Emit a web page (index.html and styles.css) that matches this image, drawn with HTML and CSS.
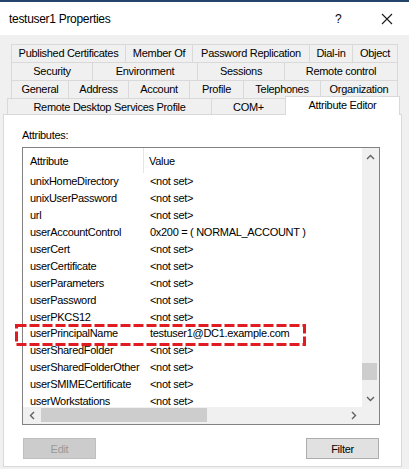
FILE: index.html
```html
<!DOCTYPE html>
<html>
<head>
<meta charset="utf-8">
<link rel="stylesheet" href="styles.css">
</head>
<body>
<div class="dialog">
  <div class="titlebar">
    <span class="title">testuser1 Properties</span>
    <span class="help">?</span>
    <svg class="close" width="12" height="12" viewBox="0 0 12 12"><path d="M1 1 L11 11 M11 1 L1 11" stroke="#1a1a1a" stroke-width="1.1" fill="none"/></svg>
  </div>
  <div class="tabs">
    <div class="row row1">
      <div class="tab">Published Certificates</div>
      <div class="tab">Member Of</div>
      <div class="tab">Password Replication</div>
      <div class="tab">Dial-in</div>
      <div class="tab">Object</div>
    </div>
    <div class="row row2">
      <div class="tab">Security</div>
      <div class="tab">Environment</div>
      <div class="tab">Sessions</div>
      <div class="tab">Remote control</div>
    </div>
    <div class="row row3">
      <div class="tab">General</div>
      <div class="tab">Address</div>
      <div class="tab">Account</div>
      <div class="tab">Profile</div>
      <div class="tab">Telephones</div>
      <div class="tab">Organization</div>
    </div>
    <div class="row row4">
      <div class="tab">Remote Desktop Services Profile</div>
      <div class="tab">COM+</div>
      <div class="tab selected">Attribute Editor</div>
    </div>
  </div>
  <div class="panel">
    <div class="label">Attributes:</div>
    <div class="listbox">
      <div class="listmain">
        <div class="header">
          <div class="hcell c1">Attribute</div>
          <div class="hcell c2">Value</div>
        </div>
        <div class="rows">
          <div class="lrow"><span class="c1">unixHomeDirectory</span><span class="c2">&lt;not set&gt;</span></div>
          <div class="lrow"><span class="c1">unixUserPassword</span><span class="c2">&lt;not set&gt;</span></div>
          <div class="lrow"><span class="c1">url</span><span class="c2">&lt;not set&gt;</span></div>
          <div class="lrow"><span class="c1">userAccountControl</span><span class="c2">0x200 = ( NORMAL_ACCOUNT )</span></div>
          <div class="lrow"><span class="c1">userCert</span><span class="c2">&lt;not set&gt;</span></div>
          <div class="lrow"><span class="c1">userCertificate</span><span class="c2">&lt;not set&gt;</span></div>
          <div class="lrow"><span class="c1">userParameters</span><span class="c2">&lt;not set&gt;</span></div>
          <div class="lrow"><span class="c1">userPassword</span><span class="c2">&lt;not set&gt;</span></div>
          <div class="lrow"><span class="c1">userPKCS12</span><span class="c2">&lt;not set&gt;</span></div>
          <div class="lrow"><span class="c1">userPrincipalName</span><span class="c2">testuser1@DC1.example.com</span></div>
          <div class="lrow"><span class="c1">userSharedFolder</span><span class="c2">&lt;not set&gt;</span></div>
          <div class="lrow"><span class="c1">userSharedFolderOther</span><span class="c2">&lt;not set&gt;</span></div>
          <div class="lrow"><span class="c1">userSMIMECertificate</span><span class="c2">&lt;not set&gt;</span></div>
          <div class="lrow"><span class="c1">userWorkstations</span><span class="c2">&lt;not set&gt;</span></div>
        </div>
      </div>
      <div class="vscroll">
        <div class="sbtn"><svg width="9" height="6" viewBox="0 0 9 6"><path d="M1 5 L4.5 1.5 L8 5" stroke="#606060" stroke-width="1.4" fill="none"/></svg></div>
        <div class="vtrack"><div class="vthumb"></div></div>
        <div class="sbtn"><svg width="9" height="6" viewBox="0 0 9 6"><path d="M1 1 L4.5 4.5 L8 1" stroke="#606060" stroke-width="1.4" fill="none"/></svg></div>
      </div>
      <div class="hscroll">
        <div class="sbtn"><svg width="6" height="9" viewBox="0 0 6 9"><path d="M5 1 L1.5 4.5 L5 8" stroke="#606060" stroke-width="1.4" fill="none"/></svg></div>
        <div class="htrack"><div class="hthumb"></div></div>
        <div class="sbtn"><svg width="6" height="9" viewBox="0 0 6 9"><path d="M1 1 L4.5 4.5 L1 8" stroke="#606060" stroke-width="1.4" fill="none"/></svg></div>
      </div>
      <div class="corner"></div>
    </div>
    <div class="buttons">
      <div class="btn disabled">Edit</div>
      <div class="btn">Filter</div>
    </div>
    <svg class="highlight" width="291" height="22" viewBox="0 0 291 22"><rect x="1.5" y="1.5" width="288" height="19" fill="none" stroke="#e01b22" stroke-width="3" stroke-dasharray="10 3"/></svg>
  </div>
</div>
</body>
</html>
```

FILE: styles.css
```css
* { box-sizing: border-box; }
html, body { margin: 0; padding: 0; }
body {
  width: 409px;
  height: 469px;
  background: #f0f0f0;
  font-family: "Liberation Sans", Arial, sans-serif;
  font-size: 11px;
  letter-spacing: -0.3px;
  color: #000;
  overflow: hidden;
}
.dialog { width: 409px; height: 469px; }
.titlebar {
  height: 35px;
  border-top: 2px solid #23456b;
  background: #fff;
  display: flex;
  align-items: center;
  padding-left: 9px;
}
.title { font-size: 12px; flex: 1; }
.help { font-size: 12px; width: 46px; }
.close { margin-right: 16px; }
.tabs { padding-top: 9px; }
.row {
  display: grid;
  height: 18px;
  margin-left: 11px;
  width: 387px;
}
.row1 { grid-template-columns: 114px 67px 117px 43px 46px; }
.row2 { grid-template-columns: 81px 105px 87px 114px; }
.row3 { grid-template-columns: 57px 60px 61px 54px 77px 78px; }
.row4 {
  grid-template-columns: 204px 74px 115px;
  margin-left: 7px;
  width: 393px;
  height: 16px;
}
.tab {
  background: #f0f0f0;
  border-top: 1px solid #d9d9d9;
  border-left: 1px solid #d9d9d9;
  display: flex;
  align-items: center;
  justify-content: center;
  white-space: nowrap;
  padding-bottom: 1px;
}
.tab:last-child { border-right: 1px solid #d9d9d9; }
.tab.selected {
  background: #fff;
  margin-top: -2px;
  height: 19px;
  position: relative;
  z-index: 2;
  padding-bottom: 2px;
}
.panel {
  position: relative;
  margin-left: 3px;
  width: 399px;
  height: 353px;
  background: #fff;
  border: 1px solid #d9d9d9;
  padding: 13px 0 0 18px;
}
.label { height: 14px; line-height: 14px; }
.listbox {
  margin-top: 5px;
  width: 358px;
  height: 278px;
  border: 1px solid #828282;
  display: grid;
  grid-template-columns: 339px 17px;
  grid-template-rows: 259px 17px;
}
.listmain { overflow: hidden; }
.header {
  display: flex;
  height: 25px;
}
.hcell { display: flex; align-items: center; height: 25px; }
.hcell.c1 { width: 121px; padding-left: 7px; border-right: 1px solid #e5e5e5; }
.hcell.c2 { padding-left: 5px; }
.lrow {
  display: flex;
  height: 16.9px;
  align-items: center;
  white-space: nowrap;
}
.lrow .c1 { width: 121px; padding-left: 7px; flex: none; }
.lrow .c2 { padding-left: 6px; }
.vscroll {
  background: #f0f0f0;
  display: flex;
  flex-direction: column;
}
.sbtn {
  width: 17px;
  height: 17px;
  flex: none;
  display: flex;
  align-items: center;
  justify-content: center;
}
.vtrack { flex: 1; position: relative; }
.vthumb {
  position: absolute;
  left: 0;
  width: 15px;
  top: 198px;
  height: 17px;
  background: #cdcdcd;
}
.hscroll {
  background: #f0f0f0;
  display: flex;
}
.htrack { flex: 1; position: relative; }
.hthumb {
  position: absolute;
  left: 1px;
  top: 1px;
  width: 166px;
  height: 14px;
  background: #cdcdcd;
}
.corner { background: #f0f0f0; }
.buttons {
  margin-top: 13px;
  width: 357px;
  display: flex;
  justify-content: space-between;
  padding-left: 1px;
}
.btn {
  width: 73px;
  height: 21px;
  border: 1px solid #adadad;
  background: #e1e1e1;
  display: flex;
  align-items: center;
  justify-content: center;
}
.btn.disabled {
  background: #cccccc;
  border-color: #bfbfbf;
  color: #9a9a9a;
}
.highlight {
  position: absolute;
  left: 11px;
  top: 209px;
}
```
